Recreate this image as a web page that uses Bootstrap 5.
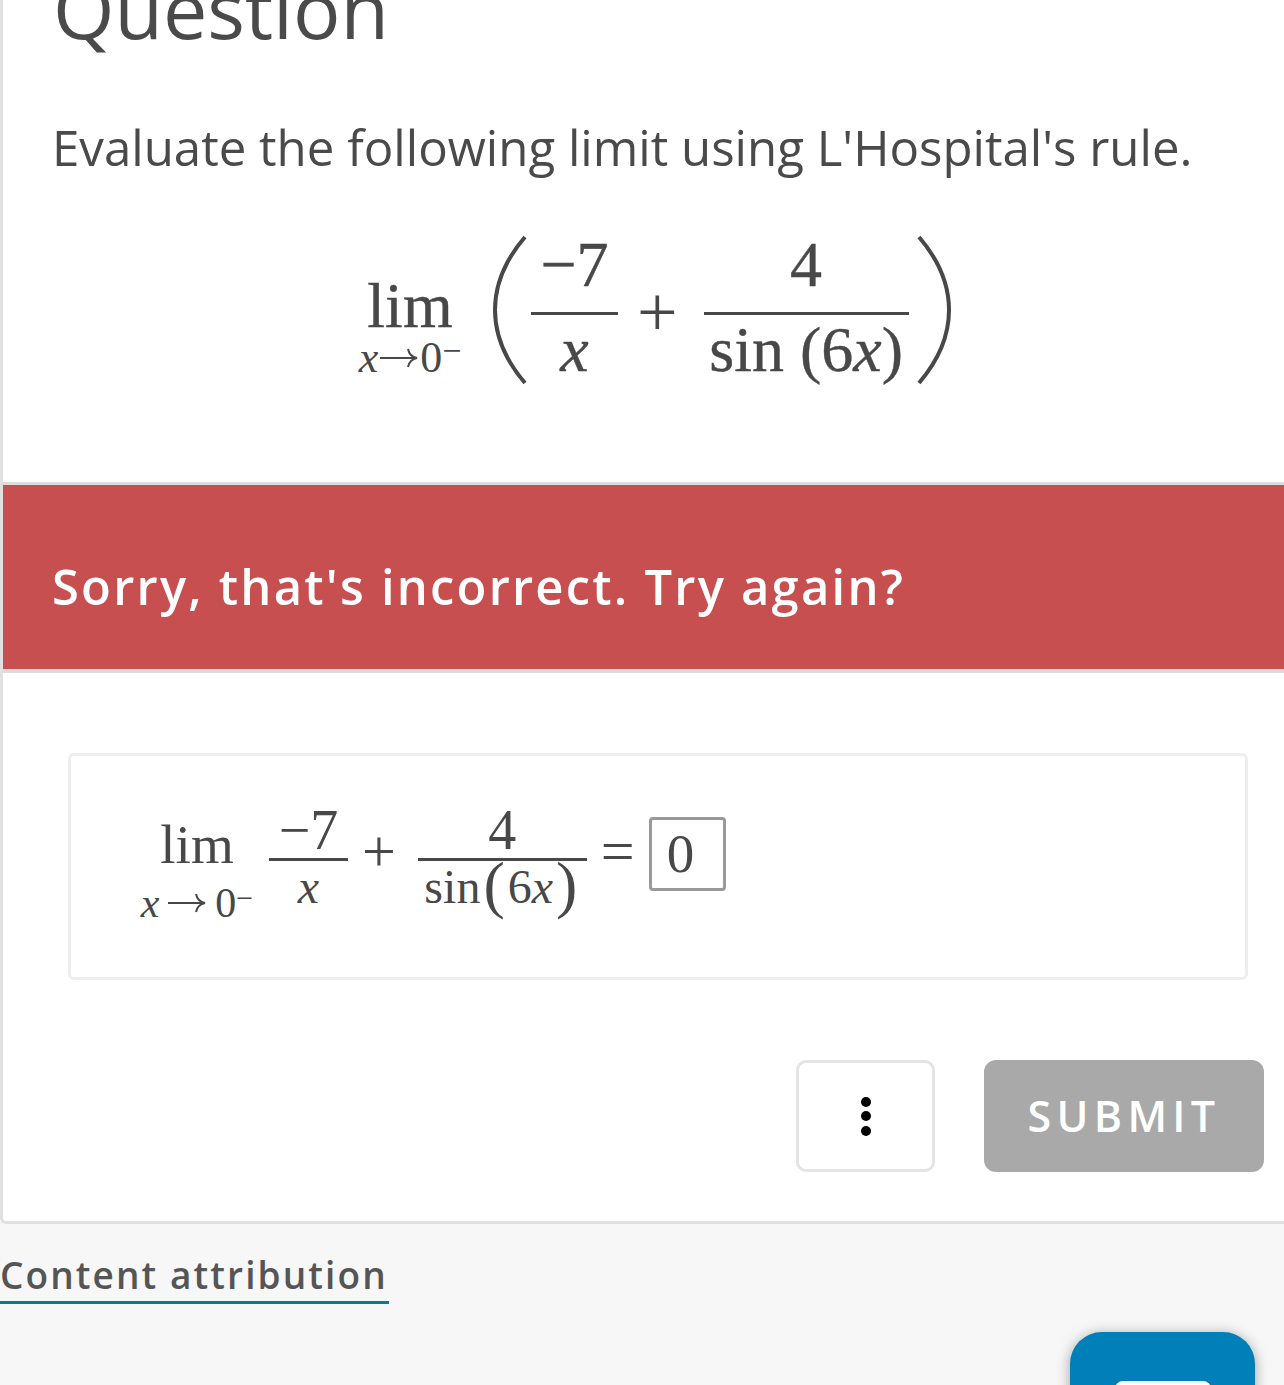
<!DOCTYPE html>
<html lang="en">
<head>
<meta charset="utf-8">
<title>Question</title>
<link href="https://cdn.jsdelivr.net/npm/bootstrap@5.3.0/dist/css/bootstrap.min.css" rel="stylesheet">
<style>
html,body{height:1385px;overflow:hidden}
body{background:#f7f7f7;font-family:"Open Sans","Noto Sans",sans-serif;color:#4a4a4a;position:relative}
.qcard{background:#fff;border-left:3px solid #e0e0e0;border-bottom:3px solid #e0e0e0;border-bottom-left-radius:6px;height:1264px}
.qtitle{font-size:79px;line-height:98px;margin:-40px 0 0 50px;font-weight:400;color:#4a4a4a;height:100px}
.qtext{font-size:49.2px;line-height:64px;margin:0 0 0 49px;padding-top:55px;height:119px;white-space:nowrap}
.mblock{height:305px;padding:56px 0 0 352px;font-family:"Liberation Serif",serif;color:#484848;font-size:64px;-webkit-text-stroke:.4px #484848}
.lim{display:flex;flex-direction:column;align-items:center;line-height:1;flex:none}
.toplim{width:110px;margin-right:24px}
.lim1{font-size:64px;line-height:60px;margin-top:41px}
.lim2{font-size:44px;line-height:44px;white-space:nowrap;-webkit-text-stroke:0;display:flex;align-items:center}
.lim2 sup{font-size:34px;margin-top:-14px;top:0}
.sublim sup{font-size:30px;margin-top:-10px;top:0}
.arrw{flex:none;margin:0 2px}
.sublim{font-size:42px;line-height:40px;white-space:nowrap;display:flex;align-items:center}
.sublim .arrw{margin:0 9px}
.frac{display:flex;flex-direction:column;align-items:center;flex:none}
.fnum{border-bottom:3px solid #484848;text-align:center;width:100%;line-height:60px;height:80px}
.fden{line-height:70px;white-space:nowrap}
.f1{width:87px}
.f2{width:205px}
.topplus{margin:47px 26px 0 19px;line-height:60px;font-size:72px;-webkit-text-stroke:0}
.par{width:42px;height:150px;flex:none}
.parr{margin-left:2px}
.qalert{background:#c84f50;border-top:3px solid #ddd;border-bottom:4px solid #dbdbdb;height:191px;color:#fff;font-size:48.9px;font-weight:600;letter-spacing:2.24px;padding:20px 0 0 49px;margin-top:-2px;display:flex;align-items:center;white-space:nowrap}
.ansbox{margin:80px 36px 0 65px;height:227px;border:3px solid #eee;border-radius:6px;background:#fff;padding:51px 0 0 66px;font-family:"Liberation Serif",serif;color:#484848;font-size:56px}
.mlim{width:120px}
.limword{font-size:55px;line-height:76px}
.m2 .fnum{line-height:46px;height:54px}
.m2 .fden{line-height:52px;font-size:48px;display:flex;align-items:center}
.bigp{font-size:64px;line-height:52px;font-weight:400;margin:-4px 3px 0}
.f3{width:79px;margin-left:12px}
.f4{width:169px;margin-left:22px}
.eq{margin:14px 0 0 14px;line-height:60px;font-size:60px;flex:none}
.ansfield{border:3px solid #999;border-radius:4px;width:77px;height:74px;font-size:55px;line-height:68px;padding-left:15px;margin:10px 0 0 14px;flex:none}
.btnrow{padding:80px 20px 0 0;gap:49px}
.kebab.btn{width:139px;height:112px;border:3px solid #e4e4e4;border-radius:10px;background:#fff;display:flex;flex-direction:column;align-items:center;justify-content:center;gap:4.5px;padding:0}
.kdot{width:10px;height:10px;background:#000;border-radius:50%}
.submit.btn{width:280px;height:112px;background:#a9a9a9;border:0;border-radius:12px;color:#fff;font-size:43px;font-weight:600;letter-spacing:5.3px;padding:0;opacity:1}
.attr{display:inline-block;margin-top:26px;font-size:37px;font-weight:600;letter-spacing:2.1px;line-height:50px;color:#555;border-bottom:3px solid #007f94;padding:0 1px 1px 0;text-decoration:none}
.chatbtn{position:absolute;left:1070px;top:1332px;width:185px;height:120px;background:#007fb8;border-radius:32px;box-shadow:0 2px 14px rgba(0,0,0,.35)}
.chatin{position:absolute;left:45px;top:49px;width:96px;height:40px;background:#fff;border-radius:8px}
</style>
</head>
<body>
<section class="qcard">
  <h2 class="qtitle">Question</h2>
  <p class="qtext">Evaluate the following limit using L'Hospital's rule.</p>
  <div class="mblock d-flex">
    <div class="lim toplim"><div class="lim1">lim</div><div class="lim2"><i>x</i><svg class="arrw" width="38" height="24" viewBox="0 0 38 24"><path d="M0 12H36M28 3c1 5 4 8 9 9c-5 1-8 4-9 9" fill="none" stroke="#484848" stroke-width="2"/></svg>0<sup>−</sup></div></div>
    <svg class="par" viewBox="0 0 42 150"><path d="M36 2C12 30 6 55 6 75s6 45 30 73" fill="none" stroke="#484848" stroke-width="4"/></svg>
    <div class="frac f1"><div class="fnum">−7</div><div class="fden"><i>x</i></div></div>
    <div class="topplus">+</div>
    <div class="frac f2"><div class="fnum">4</div><div class="fden">sin (6<i>x</i>)</div></div>
    <svg class="par parr" viewBox="0 0 42 150"><path d="M8 2c24 28 30 53 30 73s-6 45-30 73" fill="none" stroke="#484848" stroke-width="4"/></svg>
  </div>
  <div class="qalert">Sorry, that's incorrect. Try again?</div>
  <div class="ansbox d-flex">
    <div class="lim mlim"><div class="limword">lim</div><div class="sublim"><i>x</i><svg class="arrw" width="38" height="24" viewBox="0 0 38 24"><path d="M0 12H36M28 3c1 5 4 8 9 9c-5 1-8 4-9 9" fill="none" stroke="#484848" stroke-width="2"/></svg>0<sup>−</sup></div></div>
    <div class="frac m2 f3"><div class="fnum">−7</div><div class="fden"><i>x</i></div></div>
    <div class="eq">+</div>
    <div class="frac m2 f4"><div class="fnum">4</div><div class="fden">sin<span class="bigp">(</span>6<i>x</i><span class="bigp">)</span></div></div>
    <div class="eq">=</div>
    <div class="ansfield">0</div>
  </div>
  <div class="btnrow d-flex justify-content-end">
    <button class="btn kebab" aria-label="More"><span class="kdot"></span><span class="kdot"></span><span class="kdot"></span></button>
    <button class="btn submit" disabled>SUBMIT</button>
  </div>
</section>
<a class="attr" href="#">Content attribution</a>
<div class="chatbtn"><div class="chatin"></div></div>
<script src="https://cdn.jsdelivr.net/npm/bootstrap@5.3.0/dist/js/bootstrap.bundle.min.js"></script>
</body>
</html>
